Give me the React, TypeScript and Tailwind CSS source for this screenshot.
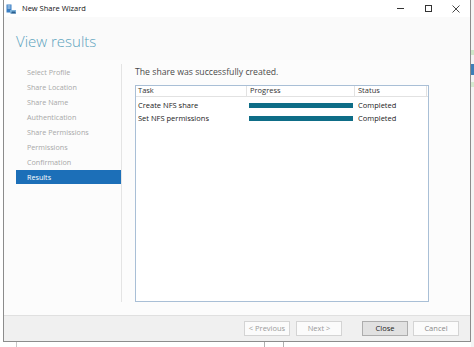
import React from 'react';

const steps = [
  'Select Profile',
  'Share Location',
  'Share Name',
  'Authentication',
  'Share Permissions',
  'Permissions',
  'Confirmation',
  'Results',
];

const rows = [
  { task: 'Create NFS share', status: 'Completed' },
  { task: 'Set NFS permissions', status: 'Completed' },
];

const ShareIcon = () => (
  <svg width="11" height="10" viewBox="0 0 11 10">
    <rect x="0.5" y="0.5" width="5" height="8" fill="#3a7fc4" />
    <rect x="1.5" y="1.5" width="3" height="1" fill="#cfe3f5" />
    <rect x="1.5" y="3.5" width="3" height="1" fill="#cfe3f5" />
    <path d="M4 6 H10 V9.5 H4 Z" fill="#7bb0d8" />
    <path d="M5 9.5 L6 7.5 L9 7.5 L10 9.5 Z" fill="#2a5f90" />
  </svg>
);

const Btn = ({ label, primary, disabled }: { label: string; primary?: boolean; disabled?: boolean }) => (
  <div
    className={
      'w-[46px] h-[15px] flex items-center justify-center text-[7.5px] border ' +
      (primary
        ? 'bg-[#e1e1e1] border-[#adadad] text-[#222]'
        : 'bg-[#fbfbfb] border-[#d4d4d4] ' + (disabled ? 'text-[#9a9a9a]' : 'text-[#8a8a8a]'))
    }
  >
    {label}
  </div>
);

export default function App() {
  return (
    <div
      className="relative w-[474px] h-[347px] bg-white overflow-hidden"
      style={{ fontFamily: '"Open Sans", "Noto Sans", sans-serif' }}
    >
      {/* background app peeking out at the right */}
      <div className="absolute left-[471px] top-0 w-[3px] h-[347px] bg-[#f4f4f4]">
        <div className="mt-[50px] h-[5px] bg-[#cfe6c8]" />
        <div className="mt-[9px] h-[11px] bg-[#3f7fb8]" />
        <div className="mt-[7px] h-[5px] bg-[#d6ead0]" />
      </div>
      {/* lines of the app behind, below the window */}
      <div className="absolute left-[16px] top-[342px] w-px h-[5px] bg-[#c8c8c8]" />
      <div className="absolute left-[264px] top-[342px] w-px h-[5px] bg-[#b0b0b0]" />
      <div className="absolute left-[283px] top-[342px] w-px h-[5px] bg-[#b0b0b0]" />

      <div className="ml-[3px] w-[468px] h-[342px] border-l border-r border-b border-[#8c8c8c] bg-[#fdfdfd] flex flex-col">
        {/* title bar */}
        <div className="h-[17px] bg-white flex items-center pl-[2px]">
          <ShareIcon />
          <span className="ml-[5px] text-[7.5px] text-[#111]">New Share Wizard</span>
          <div className="ml-auto flex items-center h-full text-[#333]">
            <div className="w-[28px] flex justify-center">
              <div className="w-[7px] h-px bg-[#333]" />
            </div>
            <div className="w-[28px] flex justify-center">
              <div className="w-[7px] h-[7px] border border-[#333]" />
            </div>
            <div className="w-[28px] flex justify-center">
              <svg width="8" height="8" viewBox="0 0 8 8">
                <path d="M0.5 0.5 L7.5 7.5 M7.5 0.5 L0.5 7.5" stroke="#333" strokeWidth="0.9" />
              </svg>
            </div>
          </div>
        </div>

        {/* header */}
        <div className="h-[43px] bg-[#fafafa] flex items-center pl-[12px]">
          <span className="text-[15px] text-[#5aa3bd] font-light leading-none mt-[5px]">View results</span>
        </div>

        {/* body */}
        <div className="flex-1 flex bg-[#fcfcfc]">
          <div className="w-[118px] pt-[0.5px] pl-[12px] border-r border-[#e4e4e4] mb-[13px] mt-[4px]">
            {steps.map((s) =>
              s === 'Results' ? (
                <div key={s} className="h-[14px] mt-[0.5px] bg-[#1c6fb8] text-white text-[7.2px] flex items-center pl-[11px]">
                  {s}
                </div>
              ) : (
                <div key={s} className="h-[15px] text-[#a8a8a8] text-[7.2px] flex items-center pl-[11px]">
                  {s}
                </div>
              ),
            )}
          </div>

          <div className="flex-1 pl-[13px] pt-[5px]">
            <div className="h-[15px] flex items-center text-[8.7px] text-[#4a4a4a]">
              The share was successfully created.
            </div>
            <div className="mt-[5px] w-[294px] h-[217px] border border-[#a9bfd6] bg-white">
              <div className="flex h-[11px] border-b border-[#e2e2e2] text-[7.5px] text-[#333]">
                <div className="w-[111px] pl-[2px] border-r border-[#e2e2e2] flex items-center">Task</div>
                <div className="w-[108px] pl-[3px] border-r border-[#e2e2e2] flex items-center">Progress</div>
                <div className="w-[72px] pl-[3px] border-r border-[#e2e2e2] flex items-center">Status</div>
              </div>
              <div className="pt-[2px]">
                {rows.map((r) => (
                  <div key={r.task} className="flex h-[13px] items-center text-[7.5px] text-[#222]">
                    <div className="w-[112px] pl-[2px]">{r.task}</div>
                    <div className="w-[108px] pl-[1px]">
                      <div className="w-[104px] h-[5px] bg-[#0e6d87]" />
                    </div>
                    <div className="pl-[2px]">{r.status}</div>
                  </div>
                ))}
              </div>
            </div>
          </div>
        </div>

        {/* footer */}
        <div className="h-[26px] bg-[#f0f0f0] border-t border-[#e0e0e0] flex items-center justify-end pr-[11px]">
          <div className="flex gap-[6px]">
            <Btn label="< Previous" disabled />
            <Btn label="Next >" disabled />
          </div>
          <div className="flex gap-[5px] ml-[20px]">
            <Btn label="Close" primary />
            <Btn label="Cancel" />
          </div>
        </div>
      </div>
    </div>
  );
}
